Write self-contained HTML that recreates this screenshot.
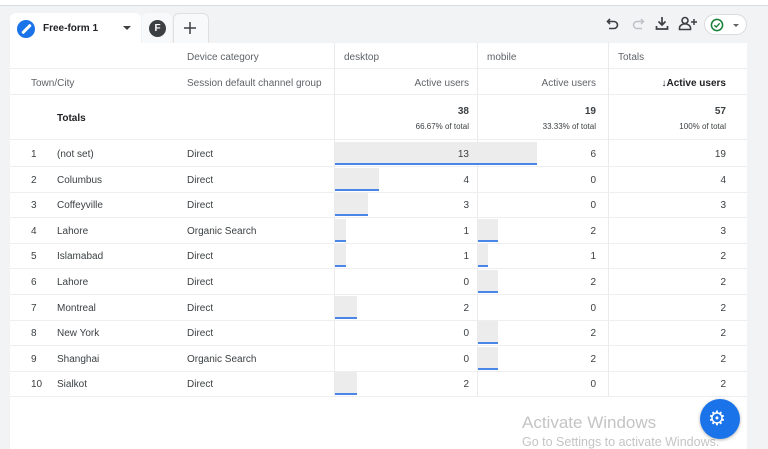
<!DOCTYPE html>
<html><head><style>
*{margin:0;padding:0;box-sizing:border-box}
body{width:768px;height:449px;background:#f1f3f4;font-family:"Liberation Sans",Arial,sans-serif;position:relative;overflow:hidden;color:#3c4043}
.top{position:absolute;left:0;top:0;width:768px;height:6px;background:#fff;border-bottom:1px solid #dadce0}
.tab{position:absolute;background:#fff;border-radius:6px 6px 0 0}
.panel{position:absolute;left:10px;top:43px;width:737px;height:406px;background:#fff}
.t{position:absolute;font-size:10px;white-space:nowrap}
.hl{position:absolute;height:1px;background:#eceef0}
.vl{position:absolute;width:1px;background:#e8eaed}
.bar{position:absolute;background:#ececec;border-bottom:2px solid #4a86e8}
.r{text-align:right}
svg{position:absolute}
</style></head><body>
<div class="top"></div>
<div class="tab" style="left:10px;top:13px;width:131px;height:31px"></div>
<div style="position:absolute;left:17px;top:20px;width:18px;height:18px;border-radius:50%;background:#1a73e8"></div>
<div style="position:absolute;left:25px;top:22.5px;width:3px;height:12px;background:#fff;transform:rotate(45deg);border-radius:1px"></div>
<div class="t" style="left:43px;top:23px;font-size:10px;font-weight:bold;color:#202124">Free-form 1</div>
<div style="position:absolute;left:123px;top:26px;border-left:4px solid transparent;border-right:4px solid transparent;border-top:4px solid #3c4043"></div>
<div class="tab" style="left:142px;top:13px;width:30px;height:31px;background:#f8f9fa"></div>
<div style="position:absolute;left:149px;top:20px;width:17px;height:17px;border-radius:50%;background:#3c4043;color:#fff;font-size:10px;font-weight:bold;text-align:center;line-height:17px">F</div>
<div class="tab" style="left:173px;top:13px;width:36px;height:31px;background:#f8f9fa;border:1px solid #e0e0e0;border-bottom:none"></div>
<svg style="left:183px;top:21px" width="14" height="14"><path d="M7 1V13M1 7H13" stroke="#3c4043" stroke-width="1.5"/></svg>
<svg style="left:606px;top:17px" width="14" height="14"><path d="M4 2L1.5 4.5L4 7M1.5 4.5H8a3.5 3.5 0 0 1 0 7H3" fill="none" stroke="#3c4043" stroke-width="1.6"/></svg>
<svg style="left:631px;top:17px" width="14" height="14"><path d="M10 2L12.5 4.5L10 7M12.5 4.5H6a3.5 3.5 0 0 0 0 7H11" fill="none" stroke="#bdc1c6" stroke-width="1.4"/></svg>
<svg style="left:655px;top:16px" width="14" height="15"><path d="M7 1V9M3.5 5.5L7 9L10.5 5.5M1.5 10V13H12.5V10" fill="none" stroke="#3c4043" stroke-width="1.7"/></svg>
<svg style="left:678px;top:16px" width="20" height="15"><circle cx="7" cy="4.5" r="3" fill="none" stroke="#3c4043" stroke-width="1.6"/><path d="M1.5 13.5V12a4 3 0 0 1 11 0v1.5z" fill="none" stroke="#3c4043" stroke-width="1.6"/><path d="M16 3V9M13 6H19" stroke="#3c4043" stroke-width="1.5"/></svg>
<div style="position:absolute;left:704px;top:14px;width:43px;height:21px;border:1px solid #dadce0;border-radius:11px;background:#fff"></div>
<svg style="left:710px;top:18px" width="14" height="14"><circle cx="7" cy="7" r="5.6" fill="none" stroke="#188038" stroke-width="1.5"/><path d="M4.3 7.2L6.2 9L9.7 5.3" fill="none" stroke="#188038" stroke-width="1.4"/></svg>
<div style="position:absolute;left:733px;top:24px;border-left:3px solid transparent;border-right:3px solid transparent;border-top:3px solid #5f6368"></div>
<div class="panel"></div>
<div class="hl" style="left:10px;top:68px;width:737px"></div>
<div class="hl" style="left:10px;top:94px;width:737px"></div>
<div class="hl" style="left:10px;top:139px;width:737px"></div>
<div class="vl" style="left:334px;top:43px;height:353px"></div>
<div class="vl" style="left:477px;top:43px;height:353px"></div>
<div class="vl" style="left:608px;top:43px;height:353px"></div>
<div class="t" style="left:187px;top:52px;color:#5f6368">Device category</div>
<div class="t" style="left:344px;top:52px;color:#5f6368">desktop</div>
<div class="t" style="left:487px;top:52px;color:#5f6368">mobile</div>
<div class="t" style="left:618px;top:52px;color:#5f6368">Totals</div>
<div class="t" style="left:31px;top:78px;color:#5f6368">Town/City</div>
<div class="t" style="left:187px;top:78px;color:#5f6368">Session default channel group</div>
<div class="t r" style="left:334px;width:135px;top:78px;color:#5f6368">Active users</div>
<div class="t r" style="left:477px;width:119px;top:78px;color:#5f6368">Active users</div>
<div class="t r" style="left:608px;width:118px;top:78px;font-weight:bold;color:#202124">↓Active users</div>
<div class="t" style="left:57px;top:113px;font-weight:bold;color:#202124">Totals</div>
<div class="t r" style="left:334px;width:135px;top:106px;font-weight:bold">38</div>
<div class="t r" style="left:334px;width:135px;top:122px;font-size:8px">66.67% of total</div>
<div class="t r" style="left:477px;width:119px;top:106px;font-weight:bold">19</div>
<div class="t r" style="left:477px;width:119px;top:122px;font-size:8px">33.33% of total</div>
<div class="t r" style="left:608px;width:118px;top:106px;font-weight:bold">57</div>
<div class="t r" style="left:608px;width:118px;top:122px;font-size:8px">100% of total</div>
<div id="rows"></div>
<div class="t" style="left:522px;top:413px;font-size:17px;color:#c4c4c4">Activate Windows</div>
<div class="t" style="left:522px;top:435px;font-size:12.5px;color:#c4c4c4">Go to Settings to activate Windows.</div>
<div style="position:absolute;left:700px;top:399px;width:40px;height:40px;border-radius:50%;background:#1a73e8;box-shadow:0 1px 3px rgba(0,0,0,.3)"></div>
<div class="t" style="left:708px;top:406px;font-size:20px;color:#fff">⚙</div>
<script>
var d=[["(not set)","Direct",13,6,19],["Columbus","Direct",4,0,4],["Coffeyville","Direct",3,0,3],["Lahore","Organic Search",1,2,3],["Islamabad","Direct",1,1,2],["Lahore","Direct",0,2,2],["Montreal","Direct",2,0,2],["New York","Direct",0,2,2],["Shanghai","Organic Search",0,2,2],["Sialkot","Direct",2,0,2]];
var h="";
d.forEach(function(r,i){var y=141+i*25.6;
if(r[2])h+='<div class="bar" style="left:335px;top:'+(y+1)+'px;width:'+(r[2]*11)+'px;height:23px"></div>';
if(r[3])h+='<div class="bar" style="left:478px;top:'+(y+1)+'px;width:'+(r[3]*9.8)+'px;height:23px"></div>';
h+='<div class="hl" style="left:10px;top:'+(y+25)+'px;width:737px"></div>';
var ty=y+8;
h+='<div class="t" style="left:31px;top:'+ty+'px">'+(i+1)+'</div><div class="t" style="left:57px;top:'+ty+'px">'+r[0]+'</div><div class="t" style="left:187px;top:'+ty+'px">'+r[1]+'</div>';
h+='<div class="t r" style="left:334px;width:135px;top:'+ty+'px">'+r[2]+'</div><div class="t r" style="left:477px;width:119px;top:'+ty+'px">'+r[3]+'</div><div class="t r" style="left:608px;width:118px;top:'+ty+'px">'+r[4]+'</div>';});
document.getElementById("rows").innerHTML=h;
</script>
</body></html>
